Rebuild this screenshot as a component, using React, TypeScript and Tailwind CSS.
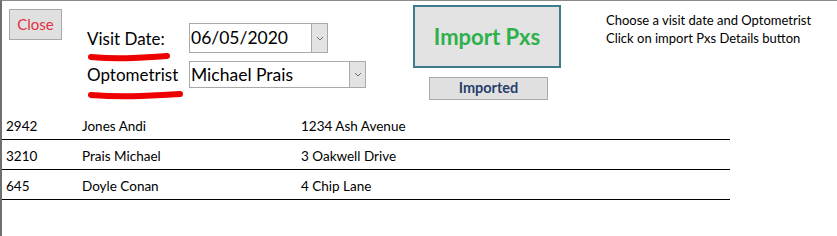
import React from 'react';

const rows = [
  { id: '2942', name: 'Jones Andi', address: '1234 Ash Avenue' },
  { id: '3210', name: 'Prais Michael', address: '3 Oakwell Drive' },
  { id: '645', name: 'Doyle Conan', address: '4 Chip Lane' },
];

function Chevron() {
  return (
    <svg width="8" height="5" viewBox="0 0 8 5" fill="none">
      <path d="M1 1 L4 4 L7 1" stroke="#6a6a6a" strokeWidth="1" />
    </svg>
  );
}

function Scribble({ width }: { width: number }) {
  return (
    <svg width={width} height="10" viewBox={`0 0 ${width} 10`} fill="none" className="absolute left-0 pointer-events-none">
      <path
        d={`M3 5 Q ${width * 0.3} 7 ${width * 0.55} 6 T ${width - 3} 4`}
        stroke="#ee0000"
        strokeWidth="6"
        strokeLinecap="round"
      />
    </svg>
  );
}

export default function App() {
  return (
    <div
      className="w-[837px] h-[236px] bg-white border-t border-t-[#8a8a8a] border-l-2 border-l-[#6f6f6f] overflow-hidden"
      style={{ fontFamily: 'Lato, "Open Sans", sans-serif' }}
    >
      {/* header */}
      <div className="flex items-start h-[109px]">
        <button className="ml-[7px] mt-[8px] w-[53px] h-[31px] bg-[#e0e0e0] border border-[#a9a9a9] text-[#e0313c] text-[15px] leading-none">
          Close
        </button>

        <div className="ml-[25px] mt-[22px] flex flex-col">
          <div className="flex items-center h-[30px]">
            <div className="relative w-[102px] text-[17px] text-black leading-none">
              Visit Date:
              <div className="absolute top-[22px] left-[1px]">
                <Scribble width={82} />
              </div>
            </div>
            <div className="flex h-[30px] w-[139px] border border-[#a9a9a9] bg-white">
              <div className="flex-1 flex items-center pl-[1px] text-[17.5px] text-black leading-none">06/05/2020</div>
              <div className="w-[16px] bg-[#e3e3e3] border-l border-[#a9a9a9] flex items-center justify-center">
                <Chevron />
              </div>
            </div>
          </div>
          <div className="flex items-center h-[27px] mt-[8px]">
            <div className="relative w-[102px] text-[17px] text-black leading-none">
              Optometrist
              <div className="absolute top-[24px] left-[1px]">
                <Scribble width={95} />
              </div>
            </div>
            <div className="flex h-[27px] w-[177px] border border-[#a9a9a9] bg-white">
              <div className="flex-1 flex items-center pl-[1px] text-[17.5px] text-black leading-none">Michael Prais</div>
              <div className="w-[16px] bg-[#e3e3e3] border-l border-[#a9a9a9] flex items-center justify-center">
                <Chevron />
              </div>
            </div>
          </div>
        </div>

        <div className="ml-[47px] mt-[4px] flex flex-col">
          <button className="w-[148px] h-[63px] bg-[#e3e3e3] border-2 border-[#3d7c8e] text-[#2eb14b] text-[22px] font-bold leading-none">
            Import Pxs
          </button>
          <div className="ml-[16px] mt-[9px] w-[119px] h-[23px] bg-[#e0e0e0] border border-[#a9a9a9] flex items-center justify-center text-[#28406b] text-[14.5px] font-bold leading-none">
            Imported
          </div>
        </div>

        <div className="ml-[45px] mt-[10px] text-[13px] leading-[18px] text-black">
          <div>Choose a visit date and Optometrist</div>
          <div>Click on import Pxs Details button</div>
        </div>
      </div>

      {/* records */}
      <div className="w-[728px]">
        {rows.map((r) => (
          <div
            key={r.id}
            className="grid grid-cols-[76px_219px_1fr] items-center h-[30px] pl-[4px] pt-[5px] border-b-[1.5px] border-black text-[13.5px] text-black leading-none"
          >
            <div>{r.id}</div>
            <div>{r.name}</div>
            <div>{r.address}</div>
          </div>
        ))}
      </div>
    </div>
  );
}
